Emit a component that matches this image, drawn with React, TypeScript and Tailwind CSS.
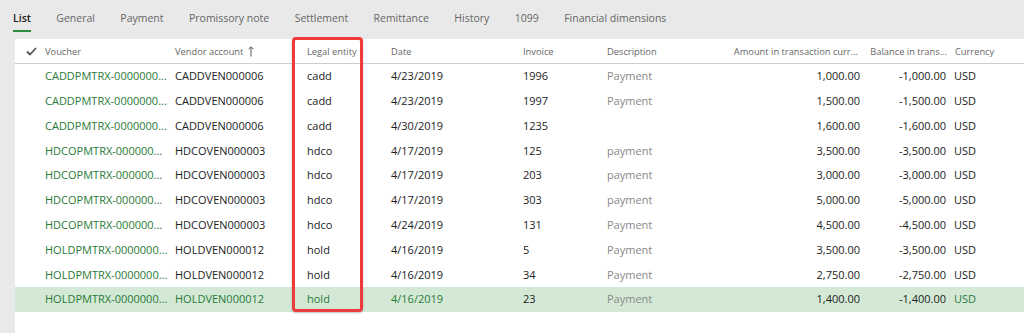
import React from 'react'

type Row = {
  voucher: string
  vendor: string
  entity: string
  date: string
  invoice: string
  desc: string
  amount: string
  balance: string
  currency: string
}

const rows: Row[] = [
  { voucher: 'CADDPMTRX-0000000...', vendor: 'CADDVEN000006', entity: 'cadd', date: '4/23/2019', invoice: '1996', desc: 'Payment', amount: '1,000.00', balance: '-1,000.00', currency: 'USD' },
  { voucher: 'CADDPMTRX-0000000...', vendor: 'CADDVEN000006', entity: 'cadd', date: '4/23/2019', invoice: '1997', desc: 'Payment', amount: '1,500.00', balance: '-1,500.00', currency: 'USD' },
  { voucher: 'CADDPMTRX-0000000...', vendor: 'CADDVEN000006', entity: 'cadd', date: '4/30/2019', invoice: '1235', desc: '', amount: '1,600.00', balance: '-1,600.00', currency: 'USD' },
  { voucher: 'HDCOPMTRX-000000...', vendor: 'HDCOVEN000003', entity: 'hdco', date: '4/17/2019', invoice: '125', desc: 'payment', amount: '3,500.00', balance: '-3,500.00', currency: 'USD' },
  { voucher: 'HDCOPMTRX-000000...', vendor: 'HDCOVEN000003', entity: 'hdco', date: '4/17/2019', invoice: '203', desc: 'payment', amount: '3,000.00', balance: '-3,000.00', currency: 'USD' },
  { voucher: 'HDCOPMTRX-000000...', vendor: 'HDCOVEN000003', entity: 'hdco', date: '4/17/2019', invoice: '303', desc: 'payment', amount: '5,000.00', balance: '-5,000.00', currency: 'USD' },
  { voucher: 'HDCOPMTRX-000000...', vendor: 'HDCOVEN000003', entity: 'hdco', date: '4/24/2019', invoice: '131', desc: 'Payment', amount: '4,500.00', balance: '-4,500.00', currency: 'USD' },
  { voucher: 'HOLDPMTRX-0000000...', vendor: 'HOLDVEN000012', entity: 'hold', date: '4/16/2019', invoice: '5', desc: 'Payment', amount: '3,500.00', balance: '-3,500.00', currency: 'USD' },
  { voucher: 'HOLDPMTRX-0000000...', vendor: 'HOLDVEN000012', entity: 'hold', date: '4/16/2019', invoice: '34', desc: 'Payment', amount: '2,750.00', balance: '-2,750.00', currency: 'USD' },
  { voucher: 'HOLDPMTRX-0000000...', vendor: 'HOLDVEN000012', entity: 'hold', date: '4/16/2019', invoice: '23', desc: 'Payment', amount: '1,400.00', balance: '-1,400.00', currency: 'USD' },
]

const tabs = ['List', 'General', 'Payment', 'Promissory note', 'Settlement', 'Remittance', 'History', '1099', 'Financial dimensions']

export default function App() {
  return (
    <div className="relative h-[333px] w-[1024px] overflow-hidden bg-[#e9e9e9] font-['Open_Sans',sans-serif]">
      {/* Tabs */}
      <div className="flex h-[39px] items-start gap-[25.4px] pl-[13px] pt-[11px] text-[10.5px]">
        {tabs.map((t, i) => (
          <div key={t} className="flex flex-col">
            <span className={i === 0 ? 'font-semibold text-[#222]' : 'text-[#666]'}>{t}</span>
            {i === 0 && <span className="mt-[3px] h-[2px] bg-[#2e8b3e]" />}
          </div>
        ))}
      </div>

      {/* Grid panel */}
      <div className="ml-[15px] h-[294px] bg-white">
        {/* Header */}
        <div className="flex h-[25px] items-center border-b border-[#cfcfcf] pt-[1px] text-[9.3px] text-[#666]">
          <div className="flex w-[30px] justify-center pl-[2px]">
            <svg width="11" height="9" viewBox="0 0 11 9" fill="none">
              <path d="M1 4.5 L4 7.5 L10 1" stroke="#555" strokeWidth="1.8" />
            </svg>
          </div>
          <div className="w-[130px]">Voucher</div>
          <div className="flex w-[132px] items-center gap-[5px]">
            <span>Vendor account</span>
            <svg width="6" height="11" viewBox="0 0 6 11" fill="none">
              <path d="M3 10.5 V1 M0.6 3.2 L3 0.8 L5.4 3.2" stroke="#555" strokeWidth="1" />
            </svg>
          </div>
          <div className="w-[84px]">Legal entity</div>
          <div className="w-[132px]">Date</div>
          <div className="w-[84px]">Invoice</div>
          <div className="w-[93px]">Description</div>
          <div className="w-[168px] whitespace-nowrap pr-[10px] text-right">Amount in transaction curr...</div>
          <div className="w-[86px] whitespace-nowrap pr-[7px] text-right">Balance in trans...</div>
          <div className="pl-[1px]">Currency</div>
        </div>

        {/* Rows */}
        {rows.map((r, i) => {
          const sel = i === rows.length - 1
          const green = 'text-[#2a7a37]'
          return (
            <div
              key={i}
              className={`flex h-[24.8px] items-center whitespace-nowrap text-[11px] ${sel ? 'bg-[#d3e9d6]' : ''}`}
            >
              <div className="w-[30px]" />
              <div className={`w-[130px] ${green}`}>{r.voucher}</div>
              <div className={`w-[132px] ${sel ? green : 'text-[#222]'}`}>{r.vendor}</div>
              <div className={`w-[84px] ${sel ? green : 'text-[#222]'}`}>{r.entity}</div>
              <div className={`w-[132px] ${sel ? green : 'text-[#222]'}`}>{r.date}</div>
              <div className="w-[84px] text-[#222]">{r.invoice}</div>
              <div className="w-[93px] text-[#888]">{r.desc}</div>
              <div className="w-[168px] pr-[8px] text-right text-[#222]">{r.amount}</div>
              <div className="w-[86px] pr-[8px] text-right text-[#222]">{r.balance}</div>
              <div className={sel ? green : 'text-[#222]'}>{r.currency}</div>
            </div>
          )
        })}
      </div>

      {/* Highlight box around Legal entity column */}
      <div className="pointer-events-none absolute left-[292px] top-[37px] h-[275px] w-[71px] rounded-[4px] border-[3px] border-[#ee3a3a] shadow-[0_1px_2px_rgba(0,0,0,0.25)]" />
    </div>
  )
}
